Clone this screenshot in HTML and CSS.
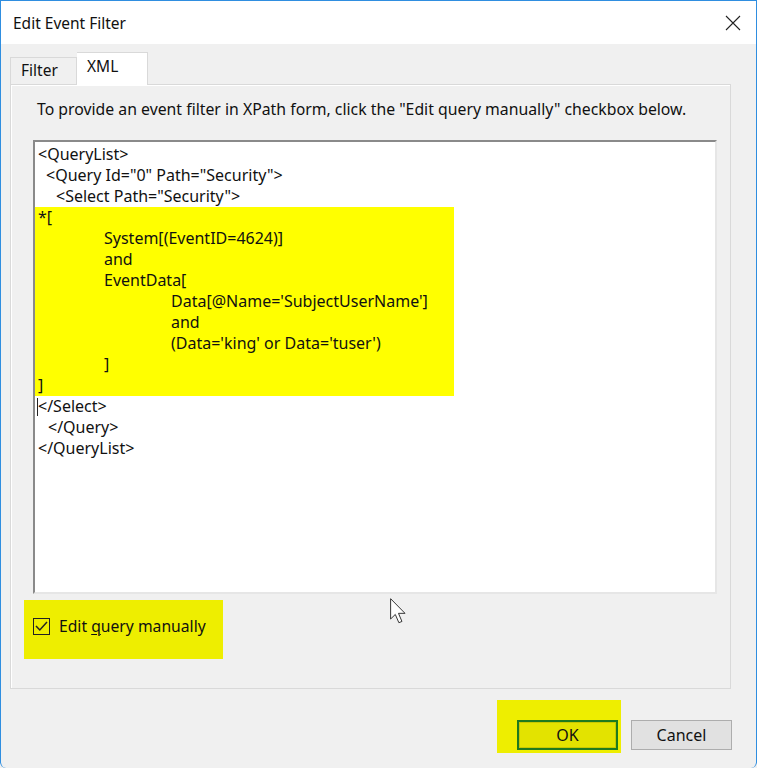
FILE: index.html
```html
<!DOCTYPE html>
<html>
<head>
<meta charset="utf-8">
<link rel="stylesheet" href="styles.css">
</head>
<body>
<div class="window">
  <div class="titlebar">
    <span class="title">Edit Event Filter</span>
    <svg class="close" width="16" height="16" viewBox="0 0 16 16"><path d="M1 1 L15 15 M15 1 L1 15" stroke="#222" stroke-width="1.1" fill="none"/></svg>
  </div>
  <div class="client">
    <div class="tabs">
      <div class="tab">Filter</div>
      <div class="tab active">XML</div>
    </div>
    <div class="panel">
      <div class="hint">To provide an event filter in XPath form, click the "Edit query manually" checkbox below.</div>
      <div class="editor">
        <div class="line">&lt;QueryList&gt;</div>
        <div class="line i1">&lt;Query Id="0" Path="Security"&gt;</div>
        <div class="line i2">&lt;Select Path="Security"&gt;</div>
        <div class="hl">
          <div class="line">*[</div>
          <div class="line t1">System[(EventID=4624)]</div>
          <div class="line t1">and</div>
          <div class="line t1">EventData[</div>
          <div class="line t2">Data[@Name='SubjectUserName']</div>
          <div class="line t2">and</div>
          <div class="line t2">(Data='king' or Data='tuser')</div>
          <div class="line t1">]</div>
          <div class="line">]</div>
        </div>
        <div class="line"><span class="caret"></span>&lt;/Select&gt;</div>
        <div class="line i3">&lt;/Query&gt;</div>
        <div class="line">&lt;/QueryList&gt;</div>
      </div>
      <div class="checkrow">
        <svg class="checkbox" width="17" height="17" viewBox="0 0 17 17"><rect x="0.5" y="0.5" width="16" height="16" fill="none" stroke="#222" stroke-width="1"/><path d="M3 8 L6.8 12 L14 4" stroke="#222" stroke-width="1.5" fill="none"/></svg>
        <span class="checklabel">Edit <u>q</u>uery manually</span>
      </div>
    </div>
    <div class="buttons">
      <div class="okmark"><div class="btn ok">OK</div></div>
      <div class="btn cancel">Cancel</div>
    </div>
  </div>
  <svg class="pointer" width="16" height="26" viewBox="0 0 13 21"><path d="M0.5 0.5 V17 L4.3 13.3 L7.2 20 L9.7 19 L6.9 12.4 H12.2 Z" fill="#fff" stroke="#333" stroke-width="0.8" stroke-linejoin="round"/></svg>
</div>
</body>
</html>
```
FILE: styles.css
```css
html, body {
  margin: 0;
  padding: 0;
  background: #f0f0f0;
}
body {
  font-family: "Noto Sans", "Liberation Sans", sans-serif;
  color: #111;
}
.window {
  position: relative;
  box-sizing: border-box;
  width: 757px;
  height: 768px;
  border: 1px solid #2f8ee0;
  border-bottom: none;
  border-radius: 0 0 6px 6px;
  background: #f0f0f0;
  display: flex;
  flex-direction: column;
}
.titlebar {
  height: 43px;
  background: #fff;
  display: flex;
  align-items: center;
  justify-content: space-between;
  padding: 0 15px 0 12px;
  flex-shrink: 0;
}
.title {
  font-size: 15.5px;
  color: #111;
}
.close {
  display: block;
}
.client {
  padding: 8px 0 0 9px;
  display: flex;
  flex-direction: column;
}
.tabs {
  display: flex;
  align-items: flex-end;
  height: 32px;
  position: relative;
  z-index: 1;
}
.tab {
  box-sizing: border-box;
  height: 27px;
  width: 67px;
  border: 1px solid #d9d9d9;
  border-bottom: none;
  background: #f0f0f0;
  font-size: 15.5px;
  line-height: 20px;
  padding: 2px 0 0 10px;
  color: #111;
}
.tab.active {
  height: 33px;
  width: 71px;
  margin-bottom: -1px;
  background: #fff;
  border-left: none;
  padding: 3px 0 0 10px;
}
.panel {
  box-sizing: border-box;
  width: 721px;
  height: 605px;
  border: 1px solid #d9d9d9;
  box-shadow: inset 1px 1px 0 #fff;
  background: #f0f0f0;
  padding: 14px 0 0 22px;
  display: flex;
  flex-direction: column;
}
.hint {
  font-size: 15.8px;
  line-height: 21px;
  padding-left: 4px;
  height: 21px;
}
.editor {
  box-sizing: border-box;
  margin-top: 20px;
  width: 684px;
  height: 454px;
  background: #fff;
  border-top: 2px solid #8a8a8a;
  border-left: 2px solid #8a8a8a;
  border-right: 2px solid #e6e6e6;
  border-bottom: 2px solid #e6e6e6;
  padding-top: 2px;
  font-size: 16px;
  line-height: 21px;
}
.line {
  padding-left: 3px;
  height: 21px;
  white-space: pre;
}
.i1 { padding-left: 11px; }
.i2 { padding-left: 21px; }
.i3 { padding-left: 13px; }
.t1 { padding-left: 69px; }
.t2 { padding-left: 136px; }
.hl {
  width: 419px;
  background: #ffff00;
}
.caret {
  display: inline-block;
  width: 0;
  height: 18px;
  border-left: 1px solid #222;
  margin-left: -1px;
  vertical-align: -4px;
}
.checkrow {
  margin-top: 6px;
  margin-left: -9px;
  width: 199px;
  height: 59px;
  box-sizing: border-box;
  background: #eeee00;
  display: flex;
  align-items: flex-start;
  padding: 17px 0 0 9px;
  gap: 9px;
}
.checkbox {
  display: block;
  margin-top: 1px;
}
.checklabel {
  font-size: 15.7px;
  line-height: 19px;
  color: #111;
}
.checklabel u {
  text-decoration-thickness: 1px;
  text-underline-offset: 2px;
}
.buttons {
  display: flex;
  align-items: flex-start;
  margin-top: 11px;
  padding-left: 487px;
}
.okmark {
  width: 124px;
  height: 53px;
  box-sizing: border-box;
  background: #eeee00;
  padding: 20px 0 0 20px;
}
.btn {
  box-sizing: border-box;
  width: 101px;
  height: 30px;
  font-size: 16px;
  display: flex;
  align-items: center;
  justify-content: center;
  color: #111;
}
.ok {
  border: 2px solid #1e7a1e;
  box-shadow: inset 0 0 0 1px #c8c800;
  background: #e3e300;
}
.cancel {
  margin-top: 20px;
  margin-left: 10px;
  border: 1px solid #adadad;
  background: #e1e1e1;
}
.pointer {
  position: absolute;
  left: 389px;
  top: 597px;
}
```
